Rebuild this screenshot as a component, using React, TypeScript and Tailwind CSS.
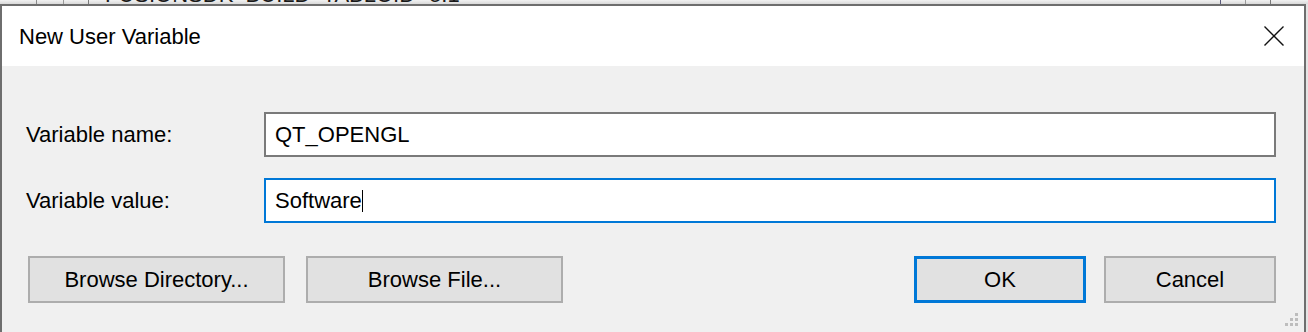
import React from 'react';

const font = { fontFamily: '"Liberation Sans", Arial, sans-serif' };

const ResizeGrip = () => (
  <svg width="16" height="16" viewBox="0 0 16 16">
    {[
      [10, 0],
      [5, 5],
      [10, 5],
      [0, 10],
      [5, 10],
      [10, 10],
    ].map(([x, y], i) => (
      <rect key={i} x={x + 1} y={y + 1} width="3" height="3" fill="#bdbdbd" />
    ))}
  </svg>
);

const CloseIcon = () => (
  <svg width="20" height="20" viewBox="0 0 20 20">
    <path d="M0.5 0.5 L19.5 19.5 M19.5 0.5 L0.5 19.5" stroke="#111" strokeWidth="1.4" />
  </svg>
);

export default function App() {
  return (
    <div
      className="w-[1308px] h-[332px] overflow-hidden flex flex-col bg-[#e8e8e8] text-[22px] text-black"
      style={font}
    >
      {/* strip of the window behind the dialog */}
      <div className="h-[4px] overflow-hidden flex bg-gradient-to-b from-[#f2f2f2] to-[#d9d9d9]">
        <div className="w-[36px]" />
        <div className="w-px bg-[#8a8a8a]" />
        <div className="w-[26px]" />
        <div className="w-px bg-[#9a9a9a]" />
        <div className="w-[24px]" />
        <div className="w-px bg-[#7a7a7a]" />
        <div className="w-[16px]" />
        <div className="-mt-[16px] leading-[22px] whitespace-nowrap text-[#1a1a1a]">
          FUSIONSDK_BUILD_TABLOID
          <span className="ml-[14px]">5.1</span>
        </div>
        <div className="flex-1" />
        <div className="w-px bg-[#5a5a7a]" />
        <div className="w-[24px]" />
        <div className="w-px bg-[#9a9a9a]" />
        <div className="w-[24px]" />
        <div className="w-px bg-[#7a7a7a]" />
        <div className="w-[37px]" />
      </div>

      <div className="flex-1 flex">
        {/* dialog */}
        <div className="w-[1306px] flex flex-col border-l-2 border-t-2 border-r-2 border-[#6e6e6e]">
          <div className="h-[60px] shrink-0 bg-white flex items-center justify-between pl-[17px] pr-[20px]">
            <span>New User Variable</span>
            <CloseIcon />
          </div>

          <div className="relative flex-1 bg-[#f0f0f0] flex flex-col pl-[24px] pr-[28px] pt-[46px]">
            <div className="flex items-center h-[45px]">
              <div className="w-[238px]">Variable name:</div>
              <div className="flex-1 h-full bg-white border-2 border-[#7a7a7a] flex items-center pl-[9px]">
                QT_OPENGL
              </div>
            </div>
            <div className="flex items-center h-[45px] mt-[21px]">
              <div className="w-[238px]">Variable value:</div>
              <div className="flex-1 h-full bg-white border-2 border-[#0078d7] flex items-center pl-[9px]">
                Software
                <span className="w-px h-[22px] bg-black" />
              </div>
            </div>

            <div className="flex items-center h-[47px] mt-[33px] pl-[2px]">
              <button className="w-[257px] h-full bg-[#e1e1e1] border-2 border-[#adadad]">
                Browse Directory...
              </button>
              <button className="w-[257px] h-full ml-[21px] bg-[#e1e1e1] border-2 border-[#adadad]">
                Browse File...
              </button>
              <div className="flex-1" />
              <button className="w-[172px] h-full bg-[#e1e1e1] border-[3px] border-[#0078d7]">
                OK
              </button>
              <button className="w-[172px] h-full ml-[18px] bg-[#e1e1e1] border-2 border-[#adadad]">
                Cancel
              </button>
            </div>

            <div className="absolute right-[4px] bottom-[4px]">
              <ResizeGrip />
            </div>
          </div>
        </div>
        <div className="flex-1 bg-[#e4e4e4]" />
      </div>
    </div>
  );
}
